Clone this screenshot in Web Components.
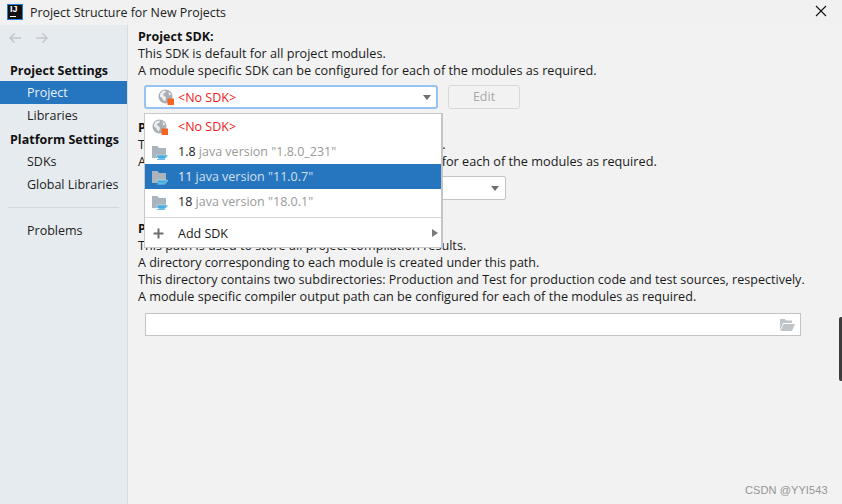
<!DOCTYPE html>
<html>
<head>
<meta charset="utf-8">
<title>Project Structure for New Projects</title>
<style>
  html, body { margin: 0; height: 100%; overflow: hidden; background: #f2f2f2; }
  body { font: 12.5px/17px "Open Sans", "Noto Sans", sans-serif; color: #1a1a1a; }
  ij-section > div { font-size: 12.65px; }
  ij-section > div.wide { font-size: 12.7px; }
  ij-section > div.tight { font-size: 12.5px; }
  ij-section > div.tighter { font-size: 12.55px; }
</style>
</head>
<body>
<ij-dialog>
  <ij-titlebar slot="title">Project Structure for New Projects</ij-titlebar>

  <ij-sidebar slot="side">
    <ij-nav-head>Project Settings</ij-nav-head>
    <ij-nav-item selected>Project</ij-nav-item>
    <ij-nav-item>Libraries</ij-nav-item>
    <ij-nav-head>Platform Settings</ij-nav-head>
    <ij-nav-item>SDKs</ij-nav-item>
    <ij-nav-item>Global Libraries</ij-nav-item>
    <ij-nav-sep></ij-nav-sep>
    <ij-nav-item>Problems</ij-nav-item>
  </ij-sidebar>

  <ij-section slot="main" style="height:91px" heading="Project SDK:">
    <div>This SDK is default for all project modules.</div>
    <div class="wide">A module specific SDK can be configured for each of the modules as required.</div>
    <ij-field-row>
      <ij-combo focused width="294" icon="globe"><span style="color:#f01c1c">&lt;No SDK&gt;</span></ij-combo>
      <ij-button disabled>Edit</ij-button>
    </ij-field-row>
  </ij-section>

  <ij-section slot="main" style="height:101px" heading="Project language level:">
    <div>This language level is default for all project modules.</div>
    <div class="wide">A module specific language level can be configured for each of the modules as required.</div>
    <ij-field-row>
      <ij-combo width="362"></ij-combo>
    </ij-field-row>
  </ij-section>

  <ij-section slot="main" heading="Project compiler output:">
    <div>This path is used to store all project compilation results.</div>
    <div class="tight">A directory corresponding to each module is created under this path.</div>
    <div class="tighter">This directory contains two subdirectories: Production and Test for production code and test sources, respectively.</div>
    <div>A module specific compiler output path can be configured for each of the modules as required.</div>
    <ij-path-field></ij-path-field>
  </ij-section>

  <ij-popup slot="overlay">
    <ij-popup-item icon="globe"><span style="color:#f01c1c">&lt;No SDK&gt;</span></ij-popup-item>
    <ij-popup-item icon="jdk">1.8 <i>java version "1.8.0_231"</i></ij-popup-item>
    <ij-popup-item icon="jdk" selected>11 <i>java version "11.0.7"</i></ij-popup-item>
    <ij-popup-item icon="jdk">18 <i>java version "18.0.1"</i></ij-popup-item>
    <ij-popup-sep></ij-popup-sep>
    <ij-popup-item icon="plus" submenu>Add SDK</ij-popup-item>
  </ij-popup>
</ij-dialog>

<script>
const ICONS = {
  globe: `<svg width="16" height="16" viewBox="0 0 16 16">
    <circle cx="7.500" cy="7.500" r="7" fill="#a9afb4"/>
    <path d="M3 3.500C4.500 2 6 1.700 8 1.800c.3 1.500-1 2.200-2.200 2.700s-.6 2.300 1 2.700 1.400 3 0 5.300C4.500 11 4.500 8.500 2 7.500 1.800 6 2.200 4.600 3 3.500z" fill="#eceeef"/>
    <path d="M10.500 2.800c1.200.6 2.200 1.700 2.700 3l-2.200.5z" fill="#eceeef"/>
    <rect x="9.500" y="9.500" width="6.500" height="6.500" fill="#f26522"/>
  </svg>`,
  jdk: `<svg width="16" height="16" viewBox="0 0 16 16">
    <path d="M0 2h5.500L7 4h7v10H0z" fill="#a9b4bc"/>
    <path d="M4.500 11h10.800c.6 0 .7 1.500-.8 1.800-.5 1.400-1.500 2.200-3 2.200H8C6 15 4.800 13 4.500 11z" fill="#45aee0" stroke="#fff" stroke-width=".4"/>
    <rect x="5" y="15.200" width="8" height=".8" fill="#45aee0"/>
  </svg>`,
  plus: `<svg width="16" height="16" viewBox="0 0 16 16">
    <path d="M6.500 2.500v10M1.500 7.500h10" stroke="#6e6e6e" stroke-width="2" fill="none"/>
  </svg>`
};

// small helper, every element just stamps css + html in its own shadow root
function define(name, css, html, setup) {
  customElements.define(name, class extends HTMLElement {
    constructor() {
      super();
      this.attachShadow({ mode: 'open' });
    }
    connectedCallback() {
      const body = typeof html === 'function' ? html(this) : html;
      this.shadowRoot.innerHTML = `<style>${css}</style>${body}`;
      if (setup) setup(this);
    }
  });
}

define('ij-dialog', `
  :host { display: grid; grid-template-rows: 25px 479px; grid-template-columns: 127px 1fr; position: relative; width: 842px; height: 504px; overflow: hidden; }
  .title { grid-column: 1 / 3; }
  .side { display: block; }
  .main { padding: 3px 0 0 11px; min-width: 0; }
  .handle { position: absolute; right: 0; top: 317px; width: 3px; height: 64px; background: #3c3c3c; border-radius: 2px 0 0 2px; }
  .mark { position: absolute; left: 745px; top: 483px; font: 11px/14px "Liberation Sans", sans-serif; color: #959595; letter-spacing: .1px; }
`, `
  <div class="title"><slot name="title"></slot></div>
  <div class="side"><slot name="side"></slot></div>
  <div class="main"><slot name="main"></slot></div>
  <slot name="overlay"></slot>
  <div class="handle"></div>
  <div class="mark">CSDN @YYI543</div>
`);

define('ij-titlebar', `
  :host { display: flex; align-items: center; height: 25px; background: #f1f1f1; padding: 0 15px 0 7px; color: #222; font-size: 12.4px; }
  .logo { box-sizing: border-box; width: 16px; height: 16px; background: #111; border: 1px solid #2b7cd3; color: #fff; font: bold 9px/9px "Liberation Sans", sans-serif; padding-left: 2px; position: relative; margin: -2px 7px 0 0; }
  .logo::after { content: ""; position: absolute; left: 2px; bottom: 2px; width: 6px; height: 1px; background: #fff; }
  .text { flex: 1; margin-top: -1px; }
  svg { margin-top: -3px; }
`, `
  <div class="logo">IJ</div>
  <div class="text"><slot></slot></div>
  <svg width="12" height="12" viewBox="0 0 12 12"><path d="M1 1l10 10M11 1L1 11" stroke="#111" stroke-width="1.100"/></svg>
`);

define('ij-sidebar', `
  :host { display: flex; flex-direction: column; height: 479px; background: #e6ebf0; border-right: 1px solid #d9dcdf; box-sizing: border-box; width: 128px; }
  .nav { display: flex; gap: 13px; padding: 6px 0 0 8px; height: 27px; box-sizing: border-box; }
  .items { padding-top: 6px; }
`, `
  <div class="nav">
    <svg width="14" height="14" viewBox="0 0 14 14"><path d="M13 7H2M6.500 2.500L2 7l4.500 4.500" stroke="#c3c7ca" stroke-width="1.500" fill="none"/></svg>
    <svg width="14" height="14" viewBox="0 0 14 14"><path d="M1 7h11M7.500 2.500L12 7l-4.500 4.500" stroke="#c3c7ca" stroke-width="1.500" fill="none"/></svg>
  </div>
  <div class="items"><slot></slot></div>
`);

define('ij-nav-head', `
  :host { display: block; height: 23px; line-height: 25px; padding-left: 10px; font-weight: 700; color: #111; white-space: nowrap; }
`, `<slot></slot>`);

define('ij-nav-item', `
  :host { display: block; height: 23px; line-height: 23px; padding-left: 27px; color: #222; white-space: nowrap; }
  :host([selected]) { background: #2675bf; color: #e8f0f8; }
`, `<slot></slot>`);

define('ij-nav-sep', `
  :host { display: block; height: 1px; margin: 11px 8px 11px 8px; background: #d5d9dd; }
`, ``);

define('ij-section', `
  :host { display: block; white-space: nowrap; }
  h3 { margin: 0; font: inherit; font-weight: 700; color: #111; }
`, el => `<h3>${el.getAttribute('heading')}</h3><slot></slot>`);

define('ij-field-row', `
  :host { display: flex; gap: 10px; margin: 6px 0 0 6px; align-items: center; height: 24px; }
`, `<slot></slot>`);

define('ij-combo', `
  :host { display: flex; align-items: center; box-sizing: border-box; height: 24px; background: #fff; border: 1px solid #c4c4c4; border-radius: 2px; padding-left: 13px; gap: 4px; position: relative; }
  :host([focused]) { border: 2px solid #97c3f3; border-radius: 3px; padding-left: 12px; }
  .caret { position: absolute; right: 6px; top: 9px; width: 0; height: 0; border: 4.500px solid transparent; border-top: 5px solid #6e6e6e; border-bottom: 0; }
  :host([focused]) .caret { right: 5px; top: 8px; }
  svg { display: block; }
`, el => {
  el.style.width = el.getAttribute('width') + 'px';
  const icon = el.getAttribute('icon');
  return `${icon ? ICONS[icon] : ''}<slot></slot><div class="caret"></div>`;
});

define('ij-button', `
  :host { display: block; box-sizing: border-box; width: 72px; height: 24px; line-height: 22px; text-align: center; border: 1px solid #d8d8d8; border-radius: 3px; background: #f2f2f2; }
  :host([disabled]) { color: #a8a8a8; }
`, `<slot></slot>`);

define('ij-path-field', `
  :host { display: flex; align-items: center; justify-content: flex-end; box-sizing: border-box; width: 656px; height: 23px; margin: 8px 0 0 7px; background: #fff; border: 1px solid #c4c4c4; padding-right: 5px; }
`, `<svg width="16" height="14" viewBox="0 0 16 14"><path d="M1 1h5l1 1.500h6V5H4L1 12.500zM4.500 6H16l-3 7H1.500z" fill="#bfc4c8"/></svg>`);

define('ij-popup', `
  :host { position: absolute; left: 144px; top: 113px; width: 299px; height: 135px; box-sizing: border-box; background: #fff; border: 1px solid #c9c9c9; border-right: 2px solid #c4c4c4; display: block; }
`, `<slot></slot>`);

define('ij-popup-item', `
  :host { display: flex; align-items: center; height: 25px; padding-left: 7px; gap: 10px; color: #1a1a1a; position: relative; white-space: nowrap; }
  :host([selected]) { background: #2675bf; color: #e8f0f8; }
  ::slotted(i) { font-style: normal; color: #9a9a9a; }
  :host([selected]) ::slotted(i) { color: #d3e0ee; }
  .arrow { position: absolute; right: 3px; top: 8px; width: 0; height: 0; border: 4px solid transparent; border-left: 6px solid #7a7a7a; border-right: 0; }
  svg { display: block; flex: none; }
`, el => `${ICONS[el.getAttribute('icon')] || ''}<div><slot></slot></div>${el.hasAttribute('submenu') ? '<div class="arrow"></div>' : ''}`);

define('ij-popup-sep', `
  :host { display: block; height: 1px; margin: 3px 0; background: #d4d4d4; }
`, ``);
</script>
</body>
</html>
